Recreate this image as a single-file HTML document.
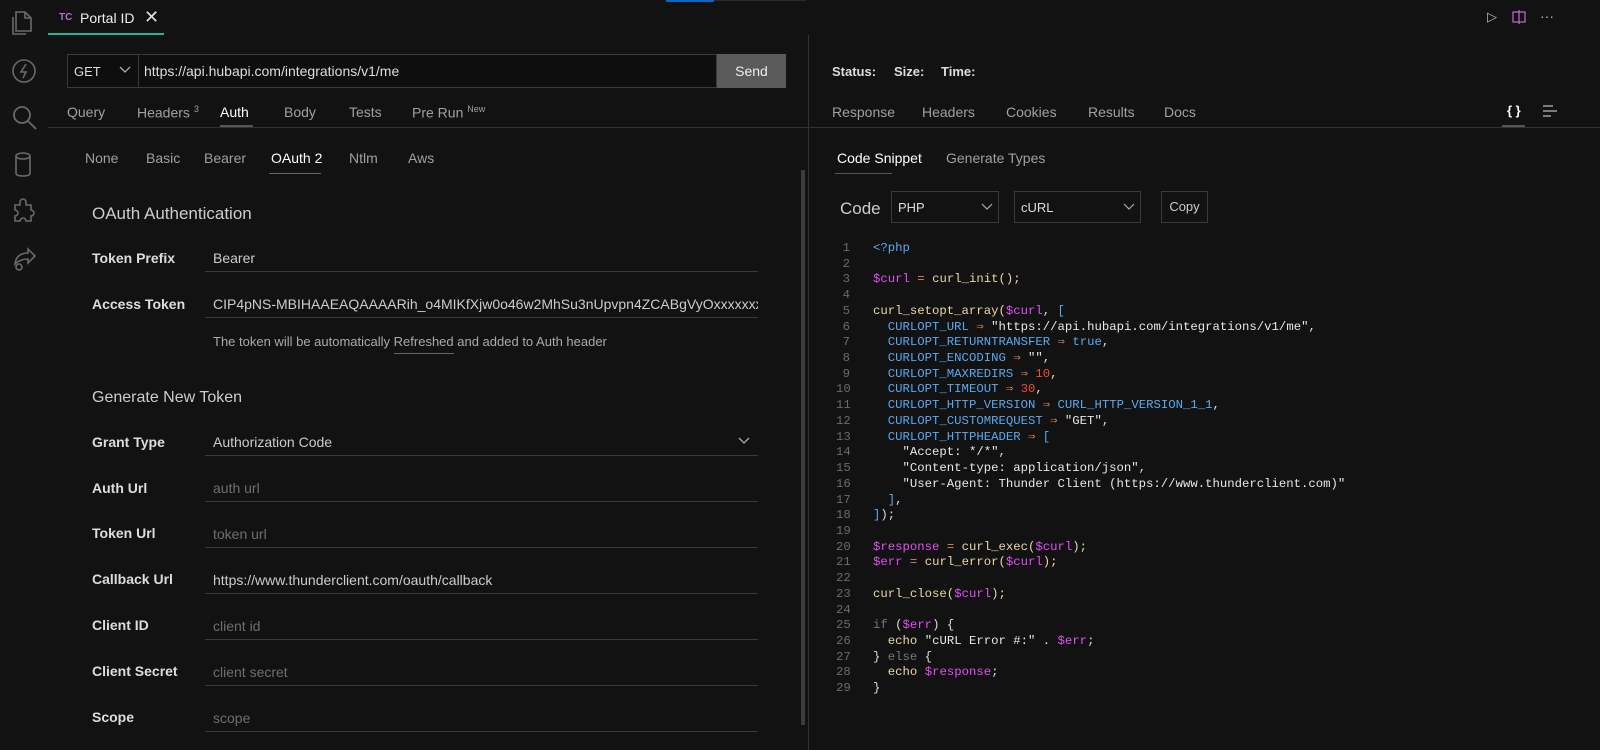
<!DOCTYPE html>
<html><head><meta charset="utf-8"><style>
*{margin:0;padding:0;box-sizing:border-box}
body{width:1600px;height:750px;background:#121212;font-family:"Liberation Sans",sans-serif;color:#ccc;position:relative;overflow:hidden;font-size:14px}
.a{position:absolute;white-space:nowrap}
.side{position:absolute;left:0;top:0;width:47px;height:750px;background:#131313}
.ic{position:absolute;left:11px}
.lbl{font-weight:bold;color:#ddd;font-size:14px}
.fld{position:absolute;left:205px;width:553px;border-bottom:1px solid #3a3a3a;height:30px;padding:8px 8px;font-size:14px;white-space:nowrap;overflow:hidden}
.ph{color:#6e6e6e}
.code{font-family:"Liberation Mono",monospace;font-size:12.3px;line-height:15.72px}
.ln{position:absolute;left:836px;top:241px;width:14px;text-align:right;color:#6a6a6a}
.src{position:absolute;left:873px;top:241px;color:#ddd;white-space:pre}
.k{color:#5aa9f0}.v{color:#e14ff5}.f{color:#e8d8a8}.o{color:#d08a5a}.n{color:#f0512a}.s{color:#e8e8e8}.g{color:#777}
.tab{position:absolute;top:104px;color:#a0a0a0}
</style></head><body>
<div class="side"></div>
<svg class="ic" style="top:9px" width="26" height="28" viewBox="0 0 26 28" fill="none" stroke="#6a6a6a" stroke-width="1.6"><path d="M5 3h9l6 6v13H5z"/><path d="M14 3v6h6"/><path d="M2 8v17h13"/></svg>
<svg class="ic" style="top:58px" width="26" height="26" viewBox="0 0 26 26" fill="none" stroke="#6a6a6a" stroke-width="1.6"><circle cx="13" cy="13" r="11"/><path d="M15 6l-5 8h5l-3 6" /></svg>
<svg class="ic" style="top:104px" width="28" height="28" viewBox="0 0 28 28" fill="none" stroke="#6a6a6a" stroke-width="1.8"><circle cx="11" cy="11" r="8"/><path d="M17 17l8 8"/></svg>
<svg class="ic" style="top:151px" width="26" height="28" viewBox="0 0 26 28" fill="none" stroke="#6a6a6a" stroke-width="1.6"><ellipse cx="12" cy="5" rx="7" ry="3"/><path d="M5 5v17c0 2 3 3 7 3s7-1 7-3V5"/></svg>
<svg class="ic" style="top:198px" width="26" height="28" viewBox="0 0 26 28" fill="none" stroke="#6a6a6a" stroke-width="1.6"><path d="M9 4a3 3 0 0 1 6 0v3h5v5a3 3 0 0 1 0 6v5h-5a3 3 0 0 0-6 0H4v-5a3 3 0 0 0 0-6V7h5z"/></svg>
<svg class="ic" style="top:244px" width="28" height="28" viewBox="0 0 28 28" fill="none" stroke="#6a6a6a" stroke-width="1.6"><path d="M4 20c1-8 6-11 13-11V5l7 7-7 7v-4c-5 0-9 1-13 5z"/><circle cx="8" cy="23" r="3"/></svg>

<div class="a" style="left:48px;top:0;width:116px;height:35px;background:#121212;border-bottom:2px solid #1bb99a"></div>
<div class="a" style="left:59px;top:12px;font-size:10px;font-weight:bold;color:#b070c8">TC</div>
<div class="a" style="left:80px;top:10px;color:#eee;font-size:14px">Portal ID</div>
<div class="a" style="left:144px;top:7px;color:#ddd;font-size:18px">✕</div>
<div class="a" style="left:666px;top:0;width:48px;height:2px;background:#0a66c8"></div>
<div class="a" style="left:714px;top:0;width:92px;height:1px;background:#2a2a2a"></div>
<div class="a" style="left:1487px;top:9px;color:#bbb;font-size:13px">▷</div>
<svg class="a" style="left:1512px;top:10px" width="14" height="14" viewBox="0 0 14 14" fill="none" stroke="#c070d0" stroke-width="1.2"><rect x="1" y="2" width="12" height="10"/><path d="M7 0v14"/></svg>
<div class="a" style="left:1540px;top:8px;color:#bbb;font-size:14px">···</div>

<div class="a" style="left:67px;top:54px;width:650px;height:34px;border:1px solid #3a3a3a;background:#0e0e0e"></div>
<div class="a" style="left:138px;top:55px;width:1px;height:32px;background:#3a3a3a"></div>
<div class="a" style="left:74px;top:64px;font-size:13px;color:#ddd">GET</div>
<svg class="a" style="left:119px;top:66px" width="12" height="8"><path d="M1 1l5 5 5-5" fill="none" stroke="#aaa" stroke-width="1.3"/></svg>
<div class="a" style="left:144px;top:63px;font-size:14px;color:#ddd">https://api.hubapi.com/integrations/v1/me</div>
<div class="a" style="left:717px;top:54px;width:69px;height:34px;background:#5a5a5a;color:#eee;text-align:center;line-height:34px;font-size:14px">Send</div>

<div class="tab" style="left:67px">Query</div>
<div class="tab" style="left:137px">Headers <sup style="font-size:9px">3</sup></div>
<div class="tab" style="left:220px;color:#fff">Auth</div>
<div class="a" style="left:220px;top:125px;width:33px;height:3px;background:#555"></div>
<div class="tab" style="left:284px">Body</div>
<div class="tab" style="left:349px">Tests</div>
<div class="tab" style="left:412px">Pre Run <sup style="font-size:9px">New</sup></div>
<div class="a" style="left:48px;top:127px;width:760px;height:1px;background:#333"></div>
<div class="a" style="left:808px;top:35px;width:1px;height:715px;background:#333"></div>
<div class="a" style="left:801px;top:170px;width:4px;height:555px;background:#3c3c3c"></div>

<div class="a" style="left:85px;top:150px;color:#a0a0a0">None</div>
<div class="a" style="left:146px;top:150px;color:#a0a0a0">Basic</div>
<div class="a" style="left:204px;top:150px;color:#a0a0a0">Bearer</div>
<div class="a" style="left:271px;top:150px;color:#fff">OAuth 2</div>
<div class="a" style="left:269px;top:173px;width:52px;height:1px;background:#666"></div>
<div class="a" style="left:349px;top:150px;color:#a0a0a0">Ntlm</div>
<div class="a" style="left:408px;top:150px;color:#a0a0a0">Aws</div>

<div class="a" style="left:92px;top:204px;font-size:17px;color:#ccc">OAuth Authentication</div>
<div class="a lbl" style="left:92px;top:250px">Token Prefix</div>
<div class="fld" style="top:242px">Bearer</div>
<div class="a lbl" style="left:92px;top:296px">Access Token</div>
<div class="fld" style="top:288px">CIP4pNS-MBIHAAEAQAAAARih_o4MIKfXjw0o46w2MhSu3nUpvpn4ZCABgVyOxxxxxxxxxxxx</div>
<div class="a" style="left:213px;top:334px;font-size:13px;color:#aaa">The token will be automatically <span style="border-bottom:1px solid #666;padding-bottom:4px">Refreshed</span> and added to Auth header</div>
<div class="a" style="left:92px;top:389px;font-size:16px;color:#ccc">Generate New Token</div>
<div class="a lbl" style="left:92px;top:434px">Grant Type</div>
<div class="fld" style="top:426px">Authorization Code</div>
<svg class="a" style="left:738px;top:437px" width="12" height="8"><path d="M1 1l5 5 5-5" fill="none" stroke="#aaa" stroke-width="1.3"/></svg>
<div class="a lbl" style="left:92px;top:480px">Auth Url</div>
<div class="fld ph" style="top:472px">auth url</div>
<div class="a lbl" style="left:92px;top:525px">Token Url</div>
<div class="fld ph" style="top:518px">token url</div>
<div class="a lbl" style="left:92px;top:571px">Callback Url</div>
<div class="fld" style="top:564px">https://www.thunderclient.com/oauth/callback</div>
<div class="a lbl" style="left:92px;top:617px">Client ID</div>
<div class="fld ph" style="top:610px">client id</div>
<div class="a lbl" style="left:92px;top:663px">Client Secret</div>
<div class="fld ph" style="top:656px">client secret</div>
<div class="a lbl" style="left:92px;top:709px">Scope</div>
<div class="fld ph" style="top:702px">scope</div>

<div class="a" style="left:832px;top:64px;font-weight:bold;font-size:13px;color:#ddd">Status:</div>
<div class="a" style="left:894px;top:64px;font-weight:bold;font-size:13px;color:#ddd">Size:</div>
<div class="a" style="left:941px;top:64px;font-weight:bold;font-size:13px;color:#ddd">Time:</div>
<div class="tab" style="left:832px">Response</div>
<div class="tab" style="left:922px">Headers</div>
<div class="tab" style="left:1006px">Cookies</div>
<div class="tab" style="left:1088px">Results</div>
<div class="tab" style="left:1164px">Docs</div>
<div class="a" style="left:1507px;top:103px;color:#fff;font-size:13px;font-weight:bold">{ }</div>
<div class="a" style="left:1502px;top:125px;width:23px;height:3px;background:#555"></div>
<svg class="a" style="left:1543px;top:105px" width="14" height="12"><path d="M0 1h10M0 6h14M0 11h8" stroke="#bbb" stroke-width="1.2"/></svg>
<div class="a" style="left:809px;top:127px;width:791px;height:1px;background:#333"></div>
<div class="a" style="left:837px;top:150px;color:#fff">Code Snippet</div>
<div class="a" style="left:835px;top:173px;width:57px;height:1px;background:#555"></div>
<div class="a" style="left:946px;top:150px;color:#a0a0a0">Generate Types</div>
<div class="a" style="left:840px;top:199px;font-size:17px;color:#ccc">Code</div>
<div class="a" style="left:891px;top:191px;width:108px;height:32px;border:1px solid #3a3a3a;padding:8px 6px;font-size:13px;color:#ddd">PHP</div>
<svg class="a" style="left:981px;top:203px" width="12" height="8"><path d="M1 1l5 5 5-5" fill="none" stroke="#aaa" stroke-width="1.2"/></svg>
<div class="a" style="left:1014px;top:191px;width:127px;height:32px;border:1px solid #3a3a3a;padding:8px 6px;font-size:13px;color:#ddd">cURL</div>
<svg class="a" style="left:1123px;top:203px" width="12" height="8"><path d="M1 1l5 5 5-5" fill="none" stroke="#aaa" stroke-width="1.2"/></svg>
<div class="a" style="left:1161px;top:191px;width:47px;height:32px;border:1px solid #3a3a3a;text-align:center;line-height:30px;font-size:13px;color:#ccc">Copy</div>

<div class="ln code">1<br>2<br>3<br>4<br>5<br>6<br>7<br>8<br>9<br>10<br>11<br>12<br>13<br>14<br>15<br>16<br>17<br>18<br>19<br>20<br>21<br>22<br>23<br>24<br>25<br>26<br>27<br>28<br>29</div>
<div class="src code"><span class="k">&lt;?php</span>

<span class="v">$curl</span> <span class="o">=</span> <span class="f">curl_init();</span>

<span class="f">curl_setopt_array(</span><span class="v">$curl</span>, <span class="k">[</span>
  <span class="k">CURLOPT_URL</span> <span class="o">⇒</span> <span class="s">"https://api.hubapi.com/integrations/v1/me"</span>,
  <span class="k">CURLOPT_RETURNTRANSFER</span> <span class="o">⇒</span> <span class="k">true</span>,
  <span class="k">CURLOPT_ENCODING</span> <span class="o">⇒</span> <span class="s">""</span>,
  <span class="k">CURLOPT_MAXREDIRS</span> <span class="o">⇒</span> <span class="n">10</span>,
  <span class="k">CURLOPT_TIMEOUT</span> <span class="o">⇒</span> <span class="n">30</span>,
  <span class="k">CURLOPT_HTTP_VERSION</span> <span class="o">⇒</span> <span class="k">CURL_HTTP_VERSION_1_1</span>,
  <span class="k">CURLOPT_CUSTOMREQUEST</span> <span class="o">⇒</span> <span class="s">"GET"</span>,
  <span class="k">CURLOPT_HTTPHEADER</span> <span class="o">⇒</span> <span class="k">[</span>
    <span class="s">"Accept: */*"</span>,
    <span class="s">"Content-type: application/json"</span>,
    <span class="s">"User-Agent: Thunder Client (https://www.thunderclient.com)"</span>
  <span class="k">]</span>,
<span class="k">]</span>);

<span class="v">$response</span> <span class="o">=</span> <span class="f">curl_exec(</span><span class="v">$curl</span><span class="f">);</span>
<span class="v">$err</span> <span class="o">=</span> <span class="f">curl_error(</span><span class="v">$curl</span><span class="f">);</span>

<span class="f">curl_close(</span><span class="v">$curl</span><span class="f">);</span>

<span class="g">if</span> (<span class="v">$err</span>) {
  <span class="f">echo</span> <span class="s">"cURL Error #:"</span> . <span class="v">$err</span>;
} <span class="g">else</span> {
  <span class="f">echo</span> <span class="v">$response</span>;
}</div>
</body></html>
